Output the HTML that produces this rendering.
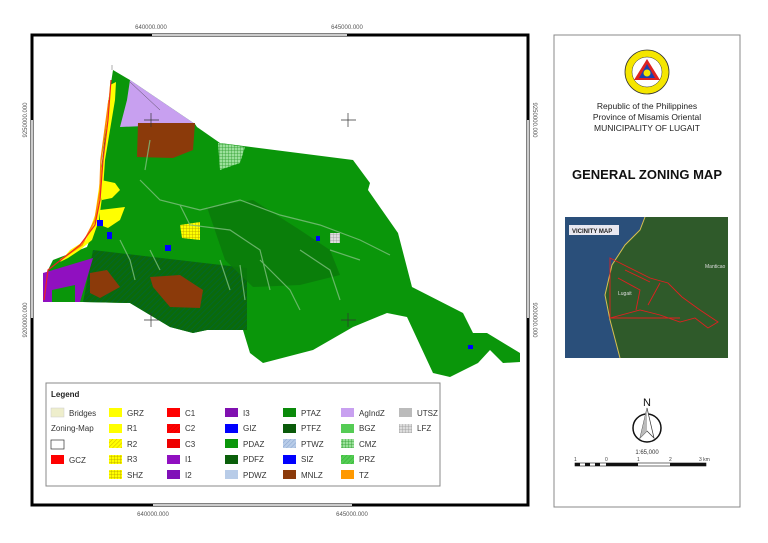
<!DOCTYPE html>
<html><head><meta charset="utf-8"><style>
html,body{margin:0;padding:0;background:#fff;width:768px;height:543px;overflow:hidden;font-family:"Liberation Sans",sans-serif}
</style></head><body>
<svg width="768" height="543" viewBox="0 0 768 543" xmlns="http://www.w3.org/2000/svg" font-family="Liberation Sans, sans-serif">
<defs>
<pattern id="hd" width="4" height="4" patternUnits="userSpaceOnUse" patternTransform="rotate(45)"><rect width="4" height="4" fill="#0a6a0a"/><line x1="0" y1="0" x2="0" y2="4" stroke="#063" stroke-width="1.5"/></pattern>
<pattern id="grid" width="3" height="3" patternUnits="userSpaceOnUse"><rect width="3" height="3" fill="#9be09b"/><path d="M0 0H3M0 0V3" stroke="#2a9a2a" stroke-width="0.8"/></pattern>
<pattern id="gg" width="3" height="3" patternUnits="userSpaceOnUse"><rect width="3" height="3" fill="#ddd"/><path d="M0 0H3M0 0V3" stroke="#999" stroke-width="0.8"/></pattern>
<pattern id="yg" width="3" height="3" patternUnits="userSpaceOnUse"><rect width="3" height="3" fill="#ff0"/><path d="M0 0H3M0 0V3" stroke="#b8a000" stroke-width="0.8"/></pattern>
<pattern id="yh" width="3" height="3" patternUnits="userSpaceOnUse" patternTransform="rotate(45)"><rect width="3" height="3" fill="#ff0"/><line x1="0" y1="0" x2="0" y2="3" stroke="#c8a000" stroke-width="0.8"/></pattern>
<pattern id="rh" width="3" height="3" patternUnits="userSpaceOnUse" patternTransform="rotate(45)"><rect width="3" height="3" fill="#f00"/><line x1="0" y1="0" x2="0" y2="3" stroke="#c00" stroke-width="0.8"/></pattern>
<pattern id="bh" width="3" height="3" patternUnits="userSpaceOnUse" patternTransform="rotate(45)"><rect width="3" height="3" fill="#b8cce8"/><line x1="0" y1="0" x2="0" y2="3" stroke="#7a9ac8" stroke-width="0.8"/></pattern>
<pattern id="gh" width="3" height="3" patternUnits="userSpaceOnUse" patternTransform="rotate(45)"><rect width="3" height="3" fill="#5c5"/><line x1="0" y1="0" x2="0" y2="3" stroke="#2a2" stroke-width="0.8"/></pattern>
</defs>
<!-- map frame -->
<rect x="32" y="35" width="496" height="470" fill="#fff" stroke="#000" stroke-width="3"/>
<line x1="152" y1="35" x2="347" y2="35" stroke="#ccc" stroke-width="2"/>
<line x1="153" y1="505" x2="352" y2="505" stroke="#ccc" stroke-width="2"/>
<line x1="32" y1="120" x2="32" y2="318" stroke="#ccc" stroke-width="2"/>
<line x1="528" y1="120" x2="528" y2="318" stroke="#ccc" stroke-width="2"/>
<g font-size="6" fill="#555">
<text x="151" y="29" text-anchor="middle">640000.000</text>
<text x="347" y="29" text-anchor="middle">645000.000</text>
<text x="153" y="516" text-anchor="middle">640000.000</text>
<text x="352" y="516" text-anchor="middle">645000.000</text>
<text transform="translate(27,120) rotate(-90)" text-anchor="middle">9250000.000</text>
<text transform="translate(27,320) rotate(-90)" text-anchor="middle">9200000.000</text>
<text transform="translate(533,120) rotate(90)" text-anchor="middle">9250000.000</text>
<text transform="translate(533,320) rotate(90)" text-anchor="middle">9200000.000</text>
</g>
<!-- map -->
<path d="M113 70 L130 80 L195 124 L197 127 L220 143 L353 160 L370 183 L368 190 L398 233 L412 287 L463 313 L473 333 L487 333 L520 353 L520 362 L503 363 L490 350 L478 363 L450 377 L433 373 L407 317 L387 313 L353 327 L313 350 L263 363 L250 353 L243 330 L207 330 L193 333 L170 327 L130 303 L83 302 L43 302 L43 280 L53 260 L87 247 L97 220 L100 180 L103 153 L108 103 Z" fill="#0a960a"/>
<path d="M93 250 L247 268 L247 330 L207 330 L193 333 L170 327 L130 303 L83 302 Z" fill="url(#hd)"/>
<path d="M207 207 L253 200 L300 230 L330 250 L340 275 L300 285 L253 287 L225 260 Z" fill="#0b7a0b" opacity="0.85"/>
<path d="M130 80 L195 124 L120 127 L127 100 Z" fill="#c8a0f0"/>
<path d="M138 123 L195 123 L193 150 L173 158 L137 157 Z" fill="#8b3a0a"/>
<path d="M90 273 L107 270 L120 287 L100 298 L90 293 Z" fill="#8b3a0a"/>
<path d="M150 277 L180 275 L203 290 L200 308 L170 307 L153 287 Z" fill="#8b3a0a"/>
<path d="M43 273 L93 258 L80 302 L43 302 Z" fill="#9010c0"/>
<path d="M52 290 L75 285 L75 302 L52 302 Z" fill="#0a960a"/>
<path d="M218 143 L245 147 L240 163 L220 170 Z" fill="url(#grid)"/>
<path d="M110 85 L116 82 L115 100 L110 130 L105 160 L103 190 L99 220 L92 240 L80 250 L68 258 L60 262 L70 250 L86 240 L95 215 L100 180 L104 150 Z" fill="#ff0"/>
<path d="M101 180 L115 183 L120 190 L112 198 L102 200 Z" fill="#ff0"/>
<path d="M100 210 L125 207 L120 220 L108 228 L100 225 Z" fill="#ff0"/>
<path d="M180 225 L200 222 L200 240 L182 238 Z" fill="url(#yg)"/>
<path d="M109 100 L105 130 L101 160 L100 190 L95 220 L82 245 L60 260" fill="none" stroke="#f80" stroke-width="1.5"/>
<path d="M111 80 L108 120 L103 160 L100 200 L95 225 L80 245 L48 270 L44 300" fill="none" stroke="#e22" stroke-width="1.2"/>
<rect x="97" y="220" width="6" height="6" fill="#00f"/><rect x="107" y="232" width="5" height="7" fill="#00f"/><rect x="165" y="245" width="6" height="6" fill="#00f"/><rect x="316" y="236" width="4" height="5" fill="#00f"/><rect x="468" y="345" width="5" height="4" fill="#00f"/>
<rect x="330" y="233" width="10" height="10" fill="url(#gg)"/>
<g fill="none" stroke="#7fc07f" stroke-width="1.2" opacity="0.8">
<path d="M150 140 L145 170 M140 180 L160 200 L200 210 L240 200 L280 215 L320 225 L360 240 L390 255"/>
<path d="M180 205 L190 225 L230 230 L260 250 L270 290 M260 260 L290 290 L300 310 M300 250 L330 270 L340 300 M330 250 L360 260"/>
<path d="M150 250 L160 270 M120 240 L130 260 L135 280 M220 260 L230 290 M240 265 L245 300"/>
</g>
<path d="M112 65 L112 70 M130 82 L160 110" stroke="#333" stroke-width="0.4"/>
<g stroke="#333" stroke-width="0.7"><path d="M144 120 H159 M151 113 V127 M341 120 H356 M348 113 V127 M144 320 H159 M151 313 V327 M341 320 H356 M348 313 V327"/></g>
<!-- legend -->
<rect x="46" y="383" width="394" height="103" fill="#fff" stroke="#888" stroke-width="1"/>
<g font-size="8" fill="#333">
<text x="51" y="397" font-weight="bold" fill="#222">Legend</text>
<rect x="51" y="408" width="13" height="9" fill="#eeeecc" stroke="#ccc" stroke-width="0.5"/><text x="69" y="416">Bridges</text>
<text x="51" y="431">Zoning-Map</text>
<rect x="51" y="440" width="13" height="9" fill="#fff" stroke="#333" stroke-width="0.7"/>
<rect x="51" y="455" width="13" height="9" fill="#f00"/><text x="69" y="463">GCZ</text>
<rect x="109" y="408" width="13" height="9" fill="#ff0"/><text x="127" y="416">GRZ</text>
<rect x="109" y="424" width="13" height="9" fill="#ff0"/><text x="127" y="431">R1</text>
<rect x="109" y="439" width="13" height="9" fill="url(#yh)"/><text x="127" y="447">R2</text>
<rect x="109" y="455" width="13" height="9" fill="url(#yg)"/><text x="127" y="462">R3</text>
<rect x="109" y="470" width="13" height="9" fill="url(#yg)"/><text x="127" y="478">SHZ</text>
<rect x="167" y="408" width="13" height="9" fill="#f00"/><text x="185" y="416">C1</text>
<rect x="167" y="424" width="13" height="9" fill="url(#rh)"/><text x="185" y="431">C2</text>
<rect x="167" y="439" width="13" height="9" fill="#e00"/><text x="185" y="447">C3</text>
<rect x="167" y="455" width="13" height="9" fill="#9010c0"/><text x="185" y="462">I1</text>
<rect x="167" y="470" width="13" height="9" fill="#8010b8"/><text x="185" y="478">I2</text>
<rect x="225" y="408" width="13" height="9" fill="#8010b0"/><text x="243" y="416">I3</text>
<rect x="225" y="424" width="13" height="9" fill="#00f"/><text x="243" y="431">GIZ</text>
<rect x="225" y="439" width="13" height="9" fill="#0a960a"/><text x="243" y="447">PDAZ</text>
<rect x="225" y="455" width="13" height="9" fill="#0a5f0a"/><text x="243" y="462">PDFZ</text>
<rect x="225" y="470" width="13" height="9" fill="#b8cce8"/><text x="243" y="478">PDWZ</text>
<rect x="283" y="408" width="13" height="9" fill="#0a8a0a"/><text x="301" y="416">PTAZ</text>
<rect x="283" y="424" width="13" height="9" fill="#0a5a0a"/><text x="301" y="431">PTFZ</text>
<rect x="283" y="439" width="13" height="9" fill="url(#bh)"/><text x="301" y="447">PTWZ</text>
<rect x="283" y="455" width="13" height="9" fill="#00f"/><text x="301" y="462">SIZ</text>
<rect x="283" y="470" width="13" height="9" fill="#8b3a0a"/><text x="301" y="478">MNLZ</text>
<rect x="341" y="408" width="13" height="9" fill="#c8a0f0"/><text x="359" y="416">AgIndZ</text>
<rect x="341" y="424" width="13" height="9" fill="#5c5"/><text x="359" y="431">BGZ</text>
<rect x="341" y="439" width="13" height="9" fill="url(#grid)"/><text x="359" y="447">CMZ</text>
<rect x="341" y="455" width="13" height="9" fill="url(#gh)"/><text x="359" y="462">PRZ</text>
<rect x="341" y="470" width="13" height="9" fill="#f90"/><text x="359" y="478">TZ</text>
<rect x="399" y="408" width="13" height="9" fill="#bbb"/><text x="417" y="416">UTSZ</text>
<rect x="399" y="424" width="13" height="9" fill="url(#gg)"/><text x="417" y="431">LFZ</text>
</g>
<!-- right panel -->
<rect x="554" y="35" width="186" height="472" fill="#fff" stroke="#888" stroke-width="1"/>
<circle cx="647" cy="72" r="22" fill="#f5e600" stroke="#333" stroke-width="0.8"/>
<circle cx="647" cy="72" r="15" fill="#fff" stroke="#333" stroke-width="0.5"/>
<path d="M647 59 L660 80 L634 80 Z" fill="#d22"/>
<path d="M647 64 L655 78 L639 78 Z" fill="#1a3fb0"/>
<circle cx="647" cy="73" r="3.5" fill="#f5e600"/>
<g font-size="8.5" fill="#222" text-anchor="middle">
<text x="647" y="109">Republic of the Philippines</text>
<text x="647" y="120">Province of Misamis Oriental</text>
<text x="647" y="131">MUNICIPALITY OF LUGAIT</text>
</g>
<text x="647" y="179" font-size="13" font-weight="bold" text-anchor="middle" fill="#111">GENERAL ZONING MAP</text>
<rect x="565" y="217" width="163" height="141" fill="#2f5a2a"/>
<path d="M565 217 H645 L640 230 L625 245 L612 265 L605 295 L610 320 L620 358 H565 Z" fill="#2a4f7a"/>
<path d="M645 217 L640 230 L625 245 L612 265 L605 295 L610 320 L620 358" fill="none" stroke="#d8c050" stroke-width="1"/>
<rect x="569" y="225" width="50" height="10" fill="#e8e8f0"/>
<text x="572" y="233" font-size="6" font-weight="bold" fill="#222">VICINITY MAP</text>
<g fill="none" stroke="#e02020" stroke-width="0.9">
<path d="M610 258 L650 278 L668 283 L682 297 L700 310 L718 322 L708 328 L695 318 L680 322 L660 315 L640 310 L610 318 Z"/>
<path d="M610 318 L680 318 M618 278 L640 290 L636 310 M660 283 L648 305 M625 270 L650 282"/>
</g>
<text x="705" y="268" font-size="5" fill="#ddd">Manticao</text>
<text x="618" y="295" font-size="5" fill="#ddd">Lugait</text>
<text x="647" y="406" font-size="11" text-anchor="middle" fill="#111">N</text>
<circle cx="647" cy="428" r="14" fill="none" stroke="#111" stroke-width="1.5"/>
<path d="M647 408 L640 438 L647 431 L654 438 Z" fill="#fff" stroke="#333" stroke-width="0.7"/>
<path d="M647 408 L647 431 L640 438 Z" fill="#bbb"/>
<text x="647" y="454" font-size="6" text-anchor="middle" fill="#333">1:65,000</text>
<g font-size="5" fill="#444"><text x="574" y="461">1</text><text x="605" y="461">0</text><text x="637" y="461">1</text><text x="669" y="461">2</text><text x="699" y="461">3 km</text></g>
<rect x="575" y="463" width="131" height="3" fill="#fff" stroke="#111" stroke-width="0.6"/>
<g fill="#111"><rect x="575" y="463" width="5" height="3"/><rect x="585" y="463" width="5" height="3"/><rect x="595" y="463" width="5" height="3"/><rect x="606" y="463" width="32" height="3"/><rect x="670" y="463" width="36" height="3"/></g>
</svg>
</body></html>
